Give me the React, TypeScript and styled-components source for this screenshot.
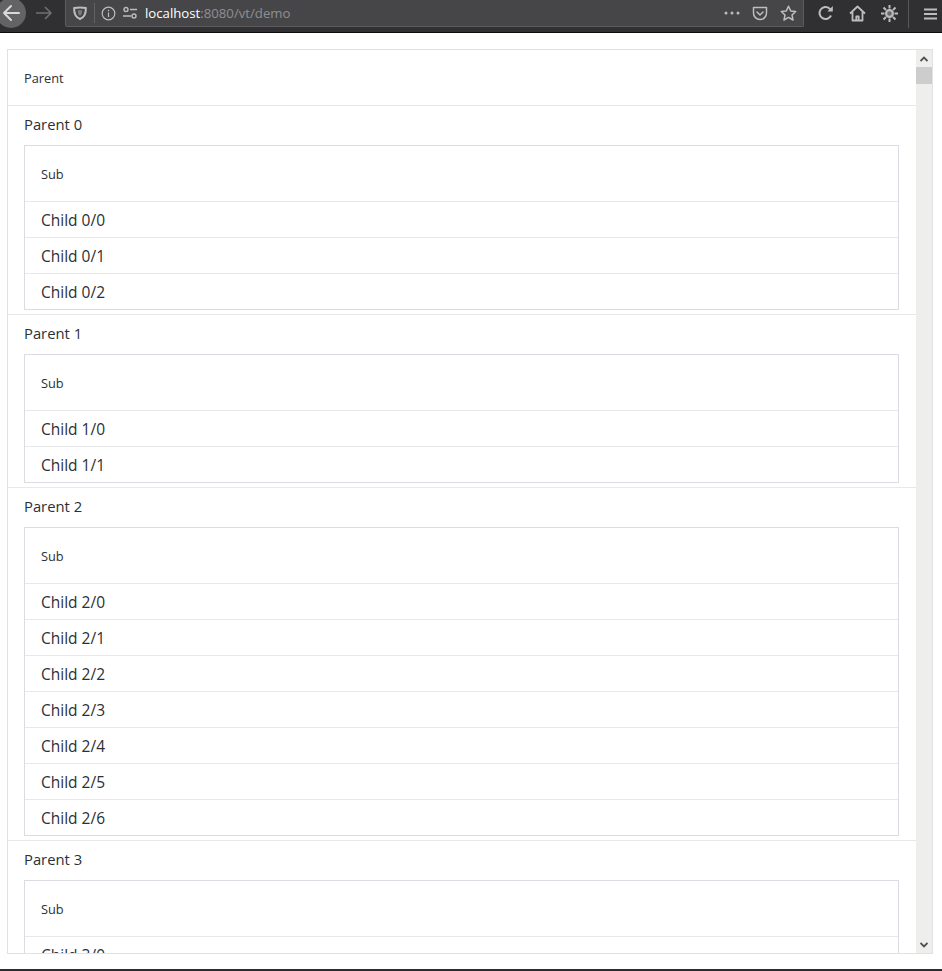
import { createGlobalStyle, styled } from 'styled-components'

const GlobalStyle = createGlobalStyle`
  html, body {
    margin: 0;
    height: 100%;
    background: #fff;
    overflow: hidden;
  }
  #root {
    height: 100%;
  }
`

const Page = styled.div`
  height: 971px;
  display: flex;
  flex-direction: column;
  font-family: 'Open Sans', 'Noto Sans', sans-serif;
  color: #2b3036;
`

const Toolbar = styled.div`
  flex: 0 0 33px;
  box-sizing: border-box;
  display: flex;
  align-items: flex-start;
  background: #303032;
  border-bottom: 1px solid #0c0c0d;
  color: #bdbdbe;
`

const NavGroup = styled.div`
  flex: 0 0 65px;
  height: 26px;
  display: flex;
  align-items: center;
  position: relative;
`

const BackCircle = styled.div`
  position: absolute;
  left: -4px;
  top: -2px;
  width: 30px;
  height: 30px;
  border-radius: 50%;
  background: #636366;
  display: flex;
  align-items: center;
  justify-content: center;
  color: #d8d8d9;
`

const ForwardSlot = styled.div`
  margin-left: 35px;
  display: flex;
  color: #707073;
`

const UrlBar = styled.div`
  flex: 0 0 739px;
  height: 27px;
  box-sizing: border-box;
  display: flex;
  align-items: center;
  background: #464649;
  border: 1px solid #5c5c5e;
  border-top: 0;
  border-radius: 0 0 2px 2px;
`

const ShieldSlot = styled.div`
  flex: 0 0 28px;
  height: 20px;
  display: flex;
  align-items: center;
  justify-content: center;
  border-right: 1px solid #626265;
  margin-right: 6px;
`

const PermissionsGap = styled.span`
  width: 6px;
`

const Address = styled.div`
  margin-left: 7px;
  flex: 1;
  font-size: 13.2px;
  color: #8f8f92;
  white-space: nowrap;
  b {
    font-weight: 400;
    color: #fff;
  }
`

const UrlActions = styled.div`
  display: flex;
  align-items: center;
  gap: 12px;
  padding-right: 6px;
`

const ToolIcons = styled.div`
  flex: 1;
  height: 26px;
  display: flex;
  align-items: center;
  padding-left: 13px;
  gap: 15px;
`

const MenuSlot = styled.div`
  flex: 0 0 34px;
  box-sizing: border-box;
  padding-left: 15px;
  height: 28px;
  display: flex;
  align-items: center;
  border-left: 1px solid #58585b;
`

const Body = styled.div`
  flex: 1;
  min-height: 0;
  padding: 16px 9px 15px 7px;
  display: flex;
  flex-direction: column;
`

const Frame = styled.div`
  flex: 1;
  min-height: 0;
  display: flex;
  border: 1px solid #dee2e6;
  background: #fff;
`

const ScrollArea = styled.div`
  flex: 1;
  min-width: 0;
  overflow: hidden;
`

const Scrollbar = styled.div`
  flex: 0 0 16px;
  display: flex;
  flex-direction: column;
  align-items: stretch;
  background: #eeeeec;
`

const ArrowButton = styled.div`
  flex: 0 0 17px;
  display: flex;
  align-items: center;
  justify-content: center;
  color: #505050;
`

const Thumb = styled.div`
  flex: 0 0 17px;
  background: #cdcdcd;
`

const TrackGap = styled.div`
  flex: 1;
`

const CardHeader = styled.div`
  box-sizing: border-box;
  height: 56px;
  padding: 1px 0 0 16px;
  display: flex;
  align-items: center;
  font-size: 12.8px;
  border-bottom: 1px solid #e6e8ea;
`

const ParentItem = styled.div`
  padding: 0 17px 4px 16px;
  border-bottom: 1px solid #e6e8ea;
`

const ParentTitle = styled.div`
  height: 39px;
  padding-bottom: 4px;
  box-sizing: border-box;
  display: flex;
  align-items: center;
  font-size: 14.8px;
`

const SubCard = styled.div`
  border: 1px solid #d9dde2;
`

const ChildRow = styled.div`
  height: 35px;
  display: flex;
  align-items: center;
  padding-left: 16px;
  font-size: 15.5px;
  border-bottom: 1px solid #e6e8ea;
  &:last-child {
    border-bottom: 0;
  }
`

const BottomLine = styled.div`
  flex: 0 0 2px;
  background: #2c2c2e;
`

const Back = () => (
  <svg width="20" height="20" viewBox="0 0 20 20" fill="none" stroke="currentColor" strokeWidth="2" strokeLinecap="round" strokeLinejoin="round">
    <path d="M18 10H3M10 3l-7 7 7 7" />
  </svg>
)

const Forward = () => (
  <svg width="18" height="18" viewBox="0 0 18 18" fill="none" stroke="currentColor" strokeWidth="1.600" strokeLinejoin="round">
    <path d="M1 9h15M10 3l6 6-6 6" />
  </svg>
)

const Shield = () => (
  <svg width="14" height="14" viewBox="0 0 14 14" fill="none" stroke="currentColor" strokeWidth="2">
    <path d="M1.200 2C3.500 1.400 10.500 1.400 12.800 2c.3 5-1.300 9-5.800 11C2.500 11 .9 7 1.200 2z" />
    <path d="M4.800 4.200h4.400C9.200 7 8.400 8.800 7 9.800 5.600 8.800 4.800 7 4.800 4.200z" fill="currentColor" fillOpacity="0.45" stroke="none" />
  </svg>
)

const Info = () => (
  <svg width="15" height="15" viewBox="0 0 15 15" fill="none" stroke="currentColor" strokeWidth="1.200">
    <circle cx="7.500" cy="7.500" r="6.300" />
    <path d="M7.500 6.500v4.500M7.500 3.800v1.500" />
  </svg>
)

const Permissions = () => (
  <svg width="16" height="14" viewBox="0 0 16 14" fill="none" stroke="currentColor" strokeWidth="1.400">
    <circle cx="4" cy="3.500" r="2" />
    <path d="M8 3.500h7M1 10h8" />
    <circle cx="12" cy="10" r="2" />
  </svg>
)

const Dots = () => (
  <svg width="16" height="4" viewBox="0 0 16 4" fill="currentColor">
    <circle cx="2" cy="2" r="1.500" />
    <circle cx="8" cy="2" r="1.500" />
    <circle cx="14" cy="2" r="1.500" />
  </svg>
)

const Pocket = () => (
  <svg width="16" height="15" viewBox="0 0 16 15" fill="none" stroke="currentColor" strokeWidth="1.500" strokeLinecap="round" strokeLinejoin="round">
    <path d="M1.500 1.500h13V7a6.500 6.500 0 0 1-13 0z" />
    <path d="M5 6l3 3 3-3" />
  </svg>
)

const Star = () => (
  <svg width="17" height="16" viewBox="0 0 17 16" fill="none" stroke="currentColor" strokeWidth="1.500" strokeLinejoin="round">
    <path d="M8.500 1.200l2.200 4.700 5 .6-3.700 3.500 1 5-4.500-2.600L4 15l1-5L1.300 6.500l5-.6z" />
  </svg>
)

const Reload = () => (
  <svg width="17" height="16" viewBox="0 0 17 16" fill="none" stroke="currentColor" strokeWidth="2">
    <path d="M14 10.500A6 6 0 1 1 12.500 3.500l2 1.500" />
    <path d="M15.800 1v5.500h-5.500z" fill="currentColor" stroke="none" />
  </svg>
)

const Home = () => (
  <svg width="17" height="17" viewBox="0 0 17 17" fill="none" stroke="currentColor" strokeWidth="1.800" strokeLinejoin="round">
    <path d="M1 8.500l7.500-7 7.500 7M3.500 7v8.500h10V7" />
    <path d="M7.300 15.500v-4h2.400v4" />
  </svg>
)

const Gear = () => (
  <svg width="17" height="17" viewBox="0 0 17 17" fill="none" stroke="currentColor" strokeWidth="2">
    <circle cx="8.500" cy="8.500" r="3.400" fill="currentColor" fillOpacity="0.4" strokeWidth="2.200" />
    <path d="M8.500 0v3.500M8.500 13.500V17M0 8.500h3.500M13.500 8.500H17M2.500 2.500L5 5M12 12l2.500 2.500M14.500 2.500L12 5M5 12l-2.500 2.500" />
  </svg>
)

const Menu = () => (
  <svg width="13" height="12" viewBox="0 0 13 12" fill="none" stroke="currentColor" strokeWidth="1.800">
    <path d="M0 1.500h13M0 6h13M0 10.500h13" />
  </svg>
)

const Chevron = ({ down }: { down?: boolean }) => (
  <svg width="8" height="6" viewBox="0 0 8 6" fill="none" stroke="currentColor" strokeWidth="1.800">
    <path d={down ? 'M.5 1L4 4.500 7.500 1' : 'M.5 5L4 1.500 7.500 5'} />
  </svg>
)

const parents = [
  { id: 0, children: 3 },
  { id: 1, children: 2 },
  { id: 2, children: 7 },
  { id: 3, children: 1 },
]

export default function App() {
  return (
    <Page>
      <GlobalStyle />
      <Toolbar>
        <NavGroup>
          <BackCircle>
            <Back />
          </BackCircle>
          <ForwardSlot>
            <Forward />
          </ForwardSlot>
        </NavGroup>
        <UrlBar>
          <ShieldSlot>
            <Shield />
          </ShieldSlot>
          <Info />
          <PermissionsGap />
          <Permissions />
          <Address>
            <b>localhost</b>:8080/vt/demo
          </Address>
          <UrlActions>
            <Dots />
            <Pocket />
            <Star />
          </UrlActions>
        </UrlBar>
        <ToolIcons>
          <Reload />
          <Home />
          <Gear />
        </ToolIcons>
        <MenuSlot>
          <Menu />
        </MenuSlot>
      </Toolbar>
      <Body>
        <Frame>
          <ScrollArea>
            <CardHeader>Parent</CardHeader>
            {parents.map(p => (
              <ParentItem key={p.id}>
                <ParentTitle>Parent {p.id}</ParentTitle>
                <SubCard>
                  <CardHeader>Sub</CardHeader>
                  {Array.from({ length: p.children }, (_, i) => (
                    <ChildRow key={i}>
                      Child {p.id}/{i}
                    </ChildRow>
                  ))}
                </SubCard>
              </ParentItem>
            ))}
          </ScrollArea>
          <Scrollbar>
            <ArrowButton>
              <Chevron />
            </ArrowButton>
            <Thumb />
            <TrackGap />
            <ArrowButton>
              <Chevron down />
            </ArrowButton>
          </Scrollbar>
        </Frame>
      </Body>
      <BottomLine />
    </Page>
  )
}
